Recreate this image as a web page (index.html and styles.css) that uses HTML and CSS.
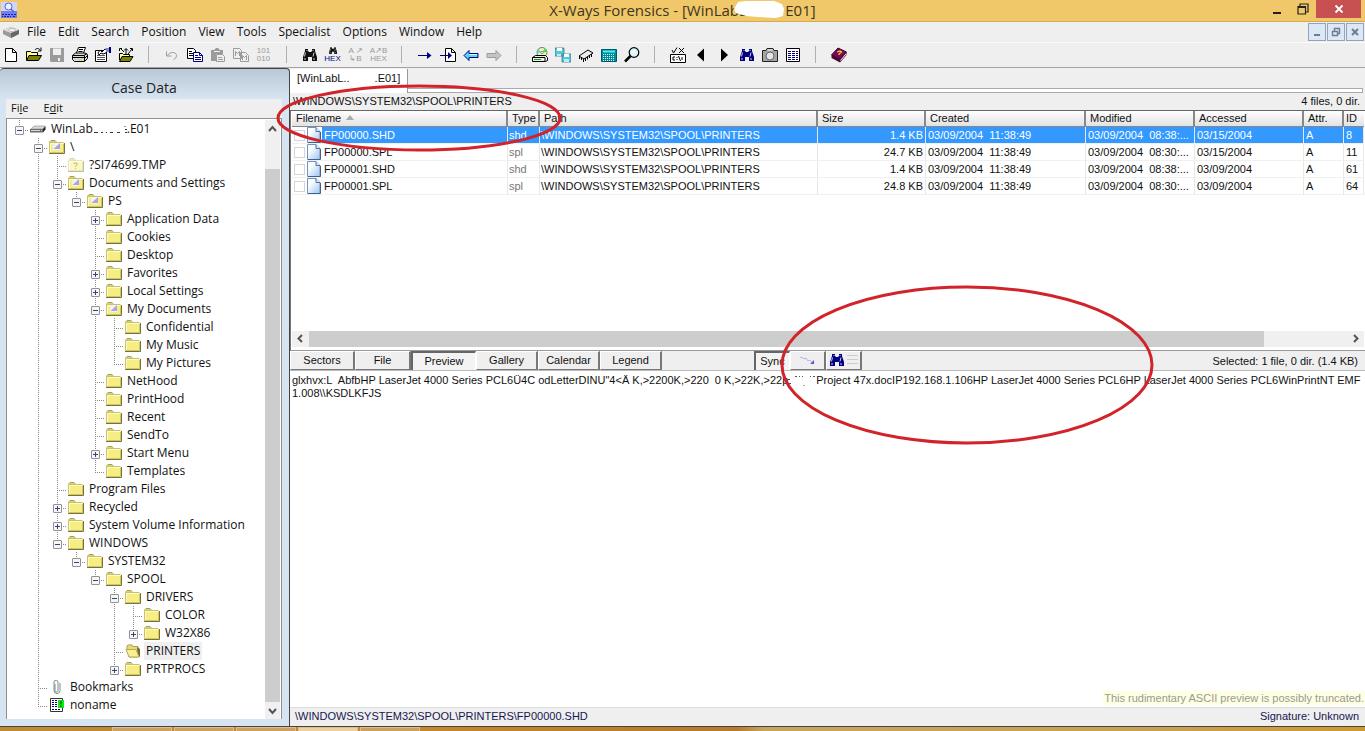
FILE: index.html
```html
<!DOCTYPE html>
<html lang="en">
<head>
    <meta charset="UTF-8">
    <meta name="viewport" content="width=device-width, initial-scale=1.0">
    <title>X-Ways Forensics</title>
    <link rel="stylesheet" href="styles.css">
</head>
<body>
    <!-- shared icons -->
    <svg class="defs" width="0" height="0">
        <linearGradient id="docFill" x1="0" y1="0" x2="1" y2="1"><stop offset="0.3" stop-color="#fafdff"/><stop offset="1" stop-color="#9fc4ee"/></linearGradient>
        <symbol id="folder" viewBox="0 0 16 14">
            <path d="M1 3V1.5L2 .5h4l1 1V3z" fill="#d8d27a" stroke="#a8a150"/>
            <path d="M0 2.5h15V13H0z" fill="#f6ee85"/>
            <path d="M.5 12.500V2.500h14" fill="none" stroke="#c9c26c"/>
            <path d="M1.500 12V3.500h13" fill="none" stroke="#fffbc8"/>
            <path d="M0 13.500h15.500V3" fill="none" stroke="#77713c"/>
            <path d="M1 12.500h13.500V4" fill="none" stroke="#cfc765"/>
        </symbol>
        <symbol id="folder-mark" viewBox="0 0 16 14">
            <use href="#folder"/>
            <path d="M4 3h7v7H4z" fill="#f4f2ec"/><path d="M11 3v6H4.500z" fill="#aaa6e6"/>
        </symbol>
        <symbol id="folder-lost" viewBox="0 0 16 14">
            <use href="#folder" opacity=".45"/>
            <path d="M6 6V5h3v2L7.500 8v1M7.500 10v1" fill="none" stroke="#c9bf58"/>
        </symbol>
        <symbol id="folder-open" viewBox="0 0 16 14">
            <path d="M2 5V2l1-1h4l1 1.500h5V13H4z" fill="#e4dc77" stroke="#a8a150"/>
            <path d="M12 3l3 2v8l-2-1z" fill="#6f6a38"/>
            <path d="M1 5.500h10L14 13H4z" fill="#f8f092" stroke="#b5ad58"/>
        </symbol>
        <symbol id="disk" viewBox="0 0 16 14">
            <path d="M1 7l3-3h11l-2 3z" fill="#d9d9d9" stroke="#9a9a9a" stroke-width=".7"/>
            <path d="M0 7h13v3.500H0z" fill="#6b6b6b"/><path d="M13 7l2.500-3v3.500L13 10.500z" fill="#222"/>
            <path d="M1 8.500h9" stroke="#ddd"/><path d="M11 8.500h1" stroke="#5f5"/>
        </symbol>
        <symbol id="doc" viewBox="0 0 14 16">
            <path d="M.5 .5h8.500l4 4v11H.5z" fill="url(#docFill)" stroke="#7093c4"/>
            <path d="M9 .5v4h4" fill="#dcebfb" stroke="#4e6fa3"/><path d="M1 15.500h12.500V5" fill="none" stroke="#40608f"/>
        </symbol>
        <symbol id="binoc" viewBox="0 0 16 16">
            <path d="M3 2h3v2l1 1h2l1-1V2h3v2l2 6v4h-5v-4H6v4H1v-4l2-6z" fill="currentColor"/>
            <path d="M3.500 5.500l-1 4M12 5.500l-1 4M5 3v1M11 3v1M3 11v2M12 11v2" stroke="#fff" stroke-width=".8"/>
        </symbol>
        <symbol id="copy" viewBox="0 0 16 16">
            <path d="M.5 1.500h6l2 2v8h-8z" fill="#fff" stroke="#000"/><path d="M2 4.500h3M2 6.500h4M2 8.500h4" stroke="#000"/>
            <path d="M6.500 5.500h6l3 3v6h-9z" fill="#fff" stroke="#000080"/><path d="M12.500 5.500v3h3M8 8.500h3M8 10.500h6M8 12.500h6" fill="none" stroke="#000080"/>
        </symbol>
    </svg>

    <header class="titlebar">
        <svg class="app-icon" width="16" height="16" viewBox="0 0 16 16">
            <rect width="16" height="16" fill="#cfd6fb"/><rect y="9" width="16" height="7" fill="#6f80ee"/>
            <circle cx="7.500" cy="4.500" r="3.500" fill="#eef2ff" stroke="#5560d8"/><path d="M10 7l3 3" stroke="#5560d8" stroke-width="1.500"/>
            <path d="M1 12.500h2M4 12.500h2M7 12.500h2M10 12.500h2M13 12.500h2M1 14.500h1M3 14.500h2M6 14.500h2M9 14.500h1M12 14.500h2" stroke="#1b22a8"/>
        </svg>
        <h1>X-Ways Forensics - [WinLabEm<svg class="blot" width="52" height="20" viewBox="0 0 52 20"><path d="M5 2l8-1h28l8 3 2 5-1 7-7 2-18-1-12-1-10-3-2-4z" fill="#fff"/></svg>E01]</h1>
        <div class="win-buttons">
            <button aria-label="Minimize"><svg width="12" height="12"><path d="M2 10h8" stroke="#222" stroke-width="2"/></svg></button>
            <button aria-label="Restore"><svg width="12" height="12"><path d="M1 3.500h7.500V11H1zM3 3.500V1h8v8H8.500" fill="none" stroke="#222" stroke-width="1.200"/><path d="M1 4h8" stroke="#222" stroke-width="2"/></svg></button>
            <button class="close" aria-label="Close"><svg width="10" height="10"><path d="M1.500 1.500l7 7M8.500 1.500l-7 7" stroke="#fff" stroke-width="1.800"/></svg></button>
        </div>
    </header>

    <nav class="menubar">
        <svg class="drive" width="17" height="12" viewBox="0 0 17 12"><path d="M0 4l8-3 8 3v4l-8 4-8-4z" fill="#999"/><path d="M0 4l8-3 8 3-8 3z" fill="#ddd"/><ellipse cx="9" cy="4" rx="3.500" ry="1.500" fill="#f8f8f8" stroke="#999" stroke-width=".6"/><path d="M8 7v5l8-4V4z" fill="#666"/></svg>
        <a href="#">File</a><a href="#">Edit</a><a href="#">Search</a><a href="#">Position</a><a href="#">View</a><a href="#">Tools</a><a href="#">Specialist</a><a href="#">Options</a><a href="#">Window</a><a href="#">Help</a>
        <div class="mdi-buttons">
            <button aria-label="Minimize document"><svg width="12" height="12"><path d="M3 9h6" stroke="#6d7c90" stroke-width="2"/></svg></button>
            <button aria-label="Restore document"><svg width="12" height="12"><path d="M2.500 5.500h5v4h-5zM4.500 5V2.500h5v5H8" fill="none" stroke="#6d7c90" stroke-width="1.400"/></svg></button>
            <button aria-label="Close document"><svg width="12" height="12"><path d="M3 3l6 6M9 3L3 9" stroke="#6d7c90" stroke-width="2"/></svg></button>
        </div>
    </nav>

    <div class="toolbar">
        <button aria-label="New"><svg viewBox="0 0 16 16"><path d="M2.500 1.500h7l4 4v9h-11zM9.500 1.500v4h4" fill="#fff" stroke="#000"/></svg></button>
        <button aria-label="Open"><svg viewBox="0 0 16 16"><path d="M.5 13V4.500h4l1 1h6V8" fill="#ffff9c" stroke="#000"/><path d="M.5 13.500L3 8.500h12.500l-3 5z" fill="#808000" stroke="#000"/><path d="M9 3c1-2 4-2 5 0M15 .5V4h-3" fill="none" stroke="#000"/></svg></button>
        <button aria-label="Save"><svg viewBox="0 0 16 16"><path d="M1 1h14v14H2l-1-1z" fill="#9b9b9b"/><path d="M4 1.500h8V8H4zM9 11h2v3H9z" fill="#efefef"/></svg></button>
        <button aria-label="Print"><svg viewBox="0 0 16 16"><path d="M4.500 6l2-5.500h7L11.500 6" fill="#fff" stroke="#000"/><path d="M7 2.500h4M6.500 4.500h4" stroke="#000"/><path d="M.5 8.500l3-2.500h9.500l2.500 1.500v4l-3 3H2.500l-2-2z" fill="#d8d8d8" stroke="#000"/><path d="M.5 8.500h11.500l3-2M.5 10.500H12M12.500 8.500v6M13 11l2-2" fill="none" stroke="#000"/><path d="M7 12.500h3" stroke="#e8e000"/></svg></button>
        <button aria-label="Properties"><svg viewBox="0 0 16 16"><path d="M.5 3.500h11v11H.5z" fill="#fff" stroke="#000"/><path d="M2 8.500h8M2 10.500h8M2 12.500h8" stroke="#555"/><path d="M3 6l2-3 2 2 3-3 2 1-1 3-3 1-2-1-2 2z" fill="#fff" stroke="#000"/><path d="M11 1h3v4h-3z" fill="#8888c8"/><path d="M14 0h2v6h-2z" fill="#000080"/></svg></button>
        <button aria-label="Open folder"><svg viewBox="0 0 16 16"><path d="M1.500 13V6.500h3l1 1h6V9" fill="#ffff9c" stroke="#000"/><path d="M1.500 14.500L4 9.500h11l-3 5z" fill="#808000" stroke="#000"/><path d="M2 1l4 4M1.500 4V1.500H4M8 8V2M6 3.500l2-2 2 2M10 7l4-5M12 1.500h2.500V4" fill="none" stroke="#000"/></svg></button>
        <span class="sep"></span>
        <button aria-label="Undo"><svg viewBox="0 0 16 16"><path d="M3.500 8.500c2-4 9-4 9 0 0 2-1 3-3 4M2.500 4.500v4.500h5" fill="none" stroke="#9b9b9b"/></svg></button>
        <button aria-label="Copy"><svg viewBox="0 0 16 16"><use href="#copy"/></svg></button>
        <button aria-label="Paste"><svg viewBox="0 0 16 16"><path d="M1 3h3l2-2h2l2 2h3v4H6v7H1z" fill="#9b9b9b"/><path d="M4 4.500h6" stroke="#efefef"/><path d="M6.500 7.500h6l2 2v5h-8zM8 10.500h4M8 12.500h5" fill="#efefef" stroke="#9b9b9b"/></svg></button>
        <button aria-label="Write clipboard"><svg viewBox="0 0 16 16"><path d="M.5 1.500h6l2 2v8h-8zM7.500 5.500h5l3 3v6h-8z" fill="#efefef" stroke="#9b9b9b"/><path d="M2.500 9V4.500l2 2 2-2V9M9.500 13V8.500l2 2 2-2V13" fill="none" stroke="#9b9b9b"/></svg></button>
        <button class="bits off" aria-label="Convert"><span>101</span><span>010</span></button>
        <span class="sep"></span>
        <button aria-label="Find text"><svg viewBox="0 0 16 16"><use href="#binoc"/></svg></button>
        <button class="bits hex" aria-label="Find hex"><svg viewBox="0 0 16 16"><use href="#binoc"/></svg><span>HEX</span></button>
        <button class="bits off" aria-label="Replace text"><span>A ↗</span><span>↳B</span></button>
        <button class="bits off" aria-label="Replace hex"><span>A↗B</span><span>HEX</span></button>
        <span class="sep"></span>
        <button aria-label="Go to offset"><svg viewBox="0 0 16 16"><path d="M1 8.500h10" stroke="#000080"/><path d="M10 5v7l4.500-3.500z" fill="#000080"/></svg></button>
        <button aria-label="Go to page"><svg viewBox="0 0 16 16"><path d="M5.500 1.500h6l4 4v9h-10zM11.500 1.500v4h4" fill="#fff" stroke="#000"/><path d="M0 8.500h9" stroke="#000080"/><path d="M8 5v7l4-3.500z" fill="#000080"/></svg></button>
        <button aria-label="Back"><svg viewBox="0 0 16 16"><path d="M1 8.500l5-5v3h9v4H6v3z" fill="#4fd8f5" stroke="#000080"/><path d="M6 7.500h8" stroke="#dffaff"/></svg></button>
        <button aria-label="Forward"><svg viewBox="0 0 16 16"><path d="M15 8.500l-5-5v3H1v4h9v3z" fill="#c4c4c4" stroke="#9b9b9b"/></svg></button>
        <span class="sep"></span>
        <button aria-label="Open disk"><svg viewBox="0 0 16 16"><circle cx="10" cy="5.500" r="5" fill="#f2f2b0" stroke="#777"/><path d="M10 5.500L13 1.500A5 5 0 0 1 15 5z" fill="#3fe04f"/><path d="M10 5.500L6 2.500 5 6z" fill="#40d8e8"/><circle cx="10" cy="5.500" r="1.200" fill="#fff" stroke="#555" stroke-width=".6"/><path d="M.5 10.500l3-2h10l2 2v3l-2 1H.5z" fill="#eee" stroke="#000"/><path d="M.5 10.500h12.500v4" fill="none" stroke="#000"/><path d="M2 12.500h7" stroke="#0a0"/></svg></button>
        <button aria-label="Clone disk"><svg viewBox="0 0 16 16"><path d="M0 1h9v8H0zM7 7h9v8H7z" fill="#4ccbd8" stroke="#4c7288" stroke-width=".8"/><path d="M2 1h5v3H2zM9 7h5v3H9z" fill="#fff"/><path d="M2 7h4v2H2zM9 12h5v3H9z" fill="#b5f0f5"/></svg></button>
        <button aria-label="Open RAM"><svg viewBox="0 0 16 16"><path d="M1 9l9-6 5 3-9 6z" fill="#ececec" stroke="#000"/><path d="M1.500 9v3M3.500 10v3M5.500 12v3M7.500 11v3M9.500 9.500v3M11.500 8v3M13.500 7v3" stroke="#000"/></svg></button>
        <button aria-label="Calculator"><svg viewBox="0 0 16 16"><path d="M.5 2.500h15v12H.5z" fill="#008b96" stroke="#005868"/><path d="M2 4.500h12" stroke="#45f1ff" stroke-width="2"/><path d="M2 7.500h12M2 9.500h12M2 11.500h12M2 13.500h12" stroke="#d8fcff" stroke-dasharray="1 1"/></svg></button>
        <button aria-label="Analyze"><svg viewBox="0 0 16 16"><circle cx="10" cy="5.500" r="4.800" fill="#d8f7fa" stroke="#000" stroke-width="1.200"/><path d="M8 6l3-3" stroke="#fff" stroke-width="2"/><path d="M6.500 9L1 14.500" stroke="#000" stroke-width="2.500"/></svg></button>
        <span class="sep"></span>
        <button aria-label="Options"><svg viewBox="0 0 16 16"><path d="M.5 7.500h15v8H.5z" fill="#fff" stroke="#000"/><path d="M2 3l1.500 3L7 .5M9 1l5 5M14 1L9 6M5 10H3v3h2M7 10v1M7 12v1M8.500 9l2 5M12 10v3" fill="none" stroke="#000"/></svg></button>
        <button aria-label="Previous"><svg viewBox="0 0 16 16"><path d="M11 1.500v13L4 8z" fill="#000"/></svg></button>
        <button aria-label="Next"><svg viewBox="0 0 16 16"><path d="M5 1.500v13L12 8z" fill="#000"/></svg></button>
        <button class="navy" aria-label="Search list"><svg viewBox="0 0 16 16"><use href="#binoc"/></svg></button>
        <button aria-label="Snapshot"><svg viewBox="0 0 16 16"><path d="M.5 3.500H4l1-2h6l1 2h3.500v11H.5z" fill="#a5a5a5" stroke="#222"/><circle cx="8" cy="9" r="4" fill="#e5e5e5" stroke="#666"/><path d="M5.500 3h5" stroke="#fff"/></svg></button>
        <button aria-label="Report"><svg viewBox="0 0 16 16"><path d="M1.500 1.500h13v13h-13z" fill="#fff" stroke="#000"/><path d="M3 4.500h3M7 4.500h3M11 4.500h2M3 6.500h3M7 6.500h3M11 6.500h2M3 8.500h3M7 8.500h3M11 8.500h2M3 10.500h3M7 10.500h3M11 10.500h2M3 12.500h3M7 12.500h3M11 12.500h2" stroke="#000080"/></svg></button>
        <span class="sep"></span>
        <button aria-label="Help"><svg viewBox="0 0 16 16"><path d="M.5 8L7 1l8.500 4L9 12z" fill="#7a0a50" stroke="#3b0028"/><path d="M.5 8v3L9 15.500V12zM9 12v3.500L15.500 8V5z" fill="#4d0635"/><path d="M9.500 13.500l5.500-6.500" stroke="#fff"/><path d="M6 5l3-1 1.500 1L8 7v1" fill="none" stroke="#ffd83a" stroke-width="1.200"/></svg></button>
    </div>

    <main class="workspace">
        <aside class="case-panel">
            <h2>Case Data</h2>
            <nav class="case-menu"><a href="#">Fi<u>l</u>e</a><a href="#">E<u>d</u>it</a></nav>
            <div class="tree-box">
                <ul class="tree">
                    <li>
                        <div class="row"><span class="cell"><button class="tg minus" aria-label="Collapse"></button></span><svg class="ico"><use href="#disk"/></svg><span class="label">WinLab<svg class="smudge" width="34" height="12"><path d="M1 9.500h4M8 9.500h2M13 9.500h1M17 9.500h3M24 9.500h3M32 3v1M32 6.500h2M32 9.500h2" stroke="#333" fill="none"/></svg>.E01</span></div>
                        <ul>
                            <li>
                                <div class="row"><span class="cell"><button class="tg minus" aria-label="Collapse"></button></span><svg class="ico"><use href="#folder-mark"/></svg><span class="label">\</span></div>
                                <ul>
                                    <li><div class="row"><span class="cell"></span><svg class="ico"><use href="#folder-lost"/></svg><span class="label">?SI74699.TMP</span></div></li>
                                    <li>
                                        <div class="row"><span class="cell"><button class="tg minus" aria-label="Collapse"></button></span><svg class="ico"><use href="#folder-mark"/></svg><span class="label">Documents and Settings</span></div>
                                        <ul>
                                            <li>
                                                <div class="row"><span class="cell"><button class="tg minus" aria-label="Collapse"></button></span><svg class="ico"><use href="#folder-mark"/></svg><span class="label">PS</span></div>
                                                <ul>
                                                    <li><div class="row"><span class="cell"><button class="tg" aria-label="Expand"></button></span><svg class="ico"><use href="#folder"/></svg><span class="label">Application Data</span></div></li>
                                                    <li><div class="row"><span class="cell"></span><svg class="ico"><use href="#folder"/></svg><span class="label">Cookies</span></div></li>
                                                    <li><div class="row"><span class="cell"></span><svg class="ico"><use href="#folder"/></svg><span class="label">Desktop</span></div></li>
                                                    <li><div class="row"><span class="cell"><button class="tg" aria-label="Expand"></button></span><svg class="ico"><use href="#folder"/></svg><span class="label">Favorites</span></div></li>
                                                    <li><div class="row"><span class="cell"><button class="tg" aria-label="Expand"></button></span><svg class="ico"><use href="#folder"/></svg><span class="label">Local Settings</span></div></li>
                                                    <li>
                                                        <div class="row"><span class="cell"><button class="tg minus" aria-label="Collapse"></button></span><svg class="ico"><use href="#folder-mark"/></svg><span class="label">My Documents</span></div>
                                                        <ul>
                                                            <li><div class="row"><span class="cell"></span><svg class="ico"><use href="#folder"/></svg><span class="label">Confidential</span></div></li>
                                                            <li><div class="row"><span class="cell"></span><svg class="ico"><use href="#folder"/></svg><span class="label">My Music</span></div></li>
                                                            <li><div class="row"><span class="cell"></span><svg class="ico"><use href="#folder"/></svg><span class="label">My Pictures</span></div></li>
                                                        </ul>
                                                    </li>
                                                    <li><div class="row"><span class="cell"></span><svg class="ico"><use href="#folder"/></svg><span class="label">NetHood</span></div></li>
                                                    <li><div class="row"><span class="cell"></span><svg class="ico"><use href="#folder"/></svg><span class="label">PrintHood</span></div></li>
                                                    <li><div class="row"><span class="cell"></span><svg class="ico"><use href="#folder"/></svg><span class="label">Recent</span></div></li>
                                                    <li><div class="row"><span class="cell"></span><svg class="ico"><use href="#folder"/></svg><span class="label">SendTo</span></div></li>
                                                    <li><div class="row"><span class="cell"><button class="tg" aria-label="Expand"></button></span><svg class="ico"><use href="#folder"/></svg><span class="label">Start Menu</span></div></li>
                                                    <li><div class="row"><span class="cell"></span><svg class="ico"><use href="#folder"/></svg><span class="label">Templates</span></div></li>
                                                </ul>
                                            </li>
                                        </ul>
                                    </li>
                                    <li><div class="row"><span class="cell"></span><svg class="ico"><use href="#folder"/></svg><span class="label">Program Files</span></div></li>
                                    <li><div class="row"><span class="cell"><button class="tg" aria-label="Expand"></button></span><svg class="ico"><use href="#folder"/></svg><span class="label">Recycled</span></div></li>
                                    <li><div class="row"><span class="cell"><button class="tg" aria-label="Expand"></button></span><svg class="ico"><use href="#folder"/></svg><span class="label">System Volume Information</span></div></li>
                                    <li>
                                        <div class="row"><span class="cell"><button class="tg minus" aria-label="Collapse"></button></span><svg class="ico"><use href="#folder"/></svg><span class="label">WINDOWS</span></div>
                                        <ul>
                                            <li>
                                                <div class="row"><span class="cell"><button class="tg minus" aria-label="Collapse"></button></span><svg class="ico"><use href="#folder"/></svg><span class="label">SYSTEM32</span></div>
                                                <ul>
                                                    <li>
                                                        <div class="row"><span class="cell"><button class="tg minus" aria-label="Collapse"></button></span><svg class="ico"><use href="#folder"/></svg><span class="label">SPOOL</span></div>
                                                        <ul>
                                                            <li>
                                                                <div class="row"><span class="cell"><button class="tg minus" aria-label="Collapse"></button></span><svg class="ico"><use href="#folder"/></svg><span class="label">DRIVERS</span></div>
                                                                <ul>
                                                                    <li><div class="row"><span class="cell"></span><svg class="ico"><use href="#folder"/></svg><span class="label">COLOR</span></div></li>
                                                                    <li><div class="row"><span class="cell"><button class="tg" aria-label="Expand"></button></span><svg class="ico"><use href="#folder"/></svg><span class="label">W32X86</span></div></li>
                                                                </ul>
                                                            </li>
                                                            <li><div class="row"><span class="cell"></span><svg class="ico"><use href="#folder-open"/></svg><span class="label current">PRINTERS</span></div></li>
                                                            <li><div class="row"><span class="cell"><button class="tg" aria-label="Expand"></button></span><svg class="ico"><use href="#folder"/></svg><span class="label">PRTPROCS</span></div></li>
                                                        </ul>
                                                    </li>
                                                </ul>
                                            </li>
                                        </ul>
                                    </li>
                                </ul>
                            </li>
                            <li><div class="row"><span class="cell"></span><svg class="ico" viewBox="0 0 16 14"><path d="M6 4v6.500a1.500 1.500 0 0 0 3 0V2.500a2 2 0 0 0-4-.5v8.500a3 3 0 0 0 6 0V3" fill="none" stroke="#7d8a8a"/></svg><span class="label">Bookmarks</span></div></li>
                            <li><div class="row"><span class="cell"></span><svg class="ico" viewBox="0 0 16 14"><path d="M1.500 .5h12v13h-12z" fill="#fff" stroke="#333"/><path d="M3 2.500h6M3 4.500h6M3 6.500h6M3 8.500h6M3 11.500h9" stroke="#000060" stroke-dasharray="2 1"/><path d="M9 2h6v8H9z" fill="#12e812"/><path d="M12 3v3.500M12 7.500v1.500" stroke="#033"/></svg><span class="label">noname</span></div></li>
                        </ul>
                    </li>
                </ul>
                <div class="vscroll">
                    <svg width="15" height="17"><path d="M4 11l3.500-4L11 11" fill="none" stroke="#555" stroke-width="2"/></svg>
                    <div class="thumb"></div>
                    <svg width="15" height="17"><path d="M4 7l3.500 4L11 7" fill="none" stroke="#555" stroke-width="2"/></svg>
                </div>
            </div>
        </aside>

        <section class="browser">
            <div class="tabs">
                <a href="#" class="tab">[WinLabL..<span class="gap"></span>.E01]</a>
                <span class="strip"></span>
            </div>
            <div class="pathbar"><span>\WINDOWS\SYSTEM32\SPOOL\PRINTERS</span><span>4 files, 0 dir.</span></div>

            <div class="list">
                <table>
                    <colgroup><col class="c-name"><col class="c-type"><col><col class="c-size"><col class="c-created"><col class="c-date"><col class="c-date"><col class="c-attr"><col class="c-id"></colgroup>
                    <thead>
                        <tr><th>Filename <svg width="8" height="5"><path d="M0 5l4-5 4 5z" fill="#aaa"/></svg></th><th>Type</th><th>Path</th><th>Size</th><th>Created</th><th>Modified</th><th>Accessed</th><th>Attr.</th><th>ID</th></tr>
                    </thead>
                    <tbody>
                        <tr class="selected"><td><div class="file"><input type="checkbox" aria-label="FP00000.SHD"><svg width="14" height="16"><use href="#doc"/></svg><span>FP00000.SHD</span></div></td><td>shd</td><td>\WINDOWS\SYSTEM32\SPOOL\PRINTERS</td><td>1.4 KB</td><td>03/09/2004&nbsp; 11:38:49</td><td>03/09/2004&nbsp; 08:38:...</td><td>03/15/2004</td><td>A</td><td>8</td></tr>
                        <tr><td><div class="file"><input type="checkbox" aria-label="FP00000.SPL"><svg width="14" height="16"><use href="#doc"/></svg><span>FP00000.SPL</span></div></td><td>spl</td><td>\WINDOWS\SYSTEM32\SPOOL\PRINTERS</td><td>24.7 KB</td><td>03/09/2004&nbsp; 11:38:49</td><td>03/09/2004&nbsp; 08:30:...</td><td>03/15/2004</td><td>A</td><td>11</td></tr>
                        <tr><td><div class="file"><input type="checkbox" aria-label="FP00001.SHD"><svg width="14" height="16"><use href="#doc"/></svg><span>FP00001.SHD</span></div></td><td>shd</td><td>\WINDOWS\SYSTEM32\SPOOL\PRINTERS</td><td>1.4 KB</td><td>03/09/2004&nbsp; 11:38:49</td><td>03/09/2004&nbsp; 08:38:...</td><td>03/09/2004</td><td>A</td><td>61</td></tr>
                        <tr><td><div class="file"><input type="checkbox" aria-label="FP00001.SPL"><svg width="14" height="16"><use href="#doc"/></svg><span>FP00001.SPL</span></div></td><td>spl</td><td>\WINDOWS\SYSTEM32\SPOOL\PRINTERS</td><td>24.8 KB</td><td>03/09/2004&nbsp; 11:38:49</td><td>03/09/2004&nbsp; 08:30:...</td><td>03/09/2004</td><td>A</td><td>64</td></tr>
                    </tbody>
                </table>
                <div class="hscroll">
                    <svg width="17" height="15"><path d="M10 4L6.500 7.500 10 11" fill="none" stroke="#555" stroke-width="2"/></svg>
                    <div class="track"><div class="thumb"></div></div>
                    <svg width="17" height="15"><path d="M7 4l3.500 3.500L7 11" fill="none" stroke="#555" stroke-width="2"/></svg>
                </div>
            </div>

            <div class="modes">
                <button>Sectors</button>
                <button>File</button>
                <button class="pressed">Preview</button>
                <button>Gallery</button>
                <button>Calendar</button>
                <button>Legend</button>
                <span class="spacer"></span>
                <button class="pressed small">Sync</button>
                <button class="small" aria-label="Explore"><svg width="18" height="10"><path d="M1 3l2-1 2 2 2-1 2 3 2-1 2 2" fill="none" stroke="#b5b3e6"/><path d="M15 5v4h-4z" fill="#5f58c8"/></svg></button>
                <button class="small navy" aria-label="Search hits"><svg width="30" height="16"><use href="#binoc" width="16" height="16"/><path d="M18 3.500h11M18 7.500h11M18 11.500h11" stroke="#ccc"/></svg></button>
                <span class="selection">Selected: 1 file, 0 dir. (1.4 KB)</span>
            </div>

            <div class="preview">
                <p>glxhvx:L&nbsp; AbfbHP LaserJet 4000 Series PCL6Ü4C odLetterDINU"4&lt;Ä K,&gt;2200K,&gt;220&nbsp; 0 K,&gt;22K,&gt;22p<svg class="smudge" width="28" height="12"><path d="M0 5.500h2M1 9.500h2M7 2.500h2M11 2.500h1M14 2.500h1M16 11v1M22 2.500h1M25 2.500h2" stroke="#555"/></svg>Project 47x.docIP192.168.1.106HP LaserJet 4000 Series PCL6HP LaserJet 4000 Series PCL6WinPrintNT EMF<br>1.008\\KSDLKFJS</p>
                <span class="notice">This rudimentary ASCII preview is possibly truncated.</span>
            </div>
            <footer class="status"><span>\WINDOWS\SYSTEM32\SPOOL\PRINTERS\FP00000.SHD</span><span>Signature: Unknown</span></footer>
        </section>
    </main>

    <div class="taskbar"><span></span><span></span><span></span><span class="active"></span><span></span></div>

    <!-- red pen marks on top of the window -->
    <svg class="marks" aria-hidden="true">
        <ellipse cx="419" cy="118" rx="141" ry="32"/>
        <ellipse cx="967" cy="365" rx="185" ry="78"/>
    </svg>
</body>
</html>
```

FILE: styles.css
```css
* {
    box-sizing: border-box;
}
body {
    margin: 0;
    height: 100vh;
    display: flex;
    flex-direction: column;
    overflow: hidden;
    background: #efefef;
    color: #111;
    font: 11px/13px "Liberation Sans", Arial, sans-serif;
}
a {
    color: inherit;
    text-decoration: none;
}
button {
    font: inherit;
    color: inherit;
    padding: 0;
    border: 0;
    background: none;
    display: flex;
    align-items: center;
    justify-content: center;
}
svg {
    flex: none;
}
.defs {
    position: absolute;
}

/* title bar */
.titlebar {
    flex: none;
    display: flex;
    align-items: flex-start;
    height: 22px;
    background: #f0c869;
    border-bottom: 1px solid #d5aa52;
}
.app-icon {
    margin: 2px 0 0 1px;
}
.titlebar h1 {
    flex: 1;
    margin: 0;
    padding-left: 84px;
    text-align: center;
    font: 15px/21px "Open Sans", sans-serif;
    color: #40351c;
    white-space: nowrap;
}
.blot {
    margin: 0 0 0 -28px;
    vertical-align: top;
}
.win-buttons {
    display: flex;
    padding-right: 4px;
}
.win-buttons button {
    width: 26px;
    height: 18px;
}
.win-buttons .close {
    width: 45px;
    background: #c75050;
}

/* menu */
.menubar {
    flex: none;
    display: flex;
    align-items: center;
    height: 20px;
    padding-left: 3px;
    font: 12px/18px "Open Sans", sans-serif;
}
.drive {
    margin-right: 7px;
}
.menubar a {
    margin-right: 12px;
}
.mdi-buttons {
    margin-left: auto;
    display: flex;
    gap: 1px;
    padding-right: 1px;
}
.mdi-buttons button {
    width: 18px;
    height: 18px;
    background: #dbe9f7;
    border: 1px solid #94a3b6;
}

/* toolbar */
.toolbar {
    flex: none;
    display: flex;
    align-items: center;
    height: 26px;
    margin-left: -1px;
    padding-bottom: 1px;
    border-top: 1px solid #fafafa;
    border-bottom: 1px solid #a3a3a3;
}
.toolbar button {
    width: 23px;
    height: 20px;
}
.toolbar svg {
    width: 16px;
    height: 16px;
}
.toolbar .sep {
    width: 1px;
    height: 17px;
    margin: 0 11px;
    background: #b0b0b0;
}
.toolbar .bits {
    flex-direction: column;
    font: 8px/8px "Liberation Sans", sans-serif;
}
.toolbar .off {
    color: #999;
}
.toolbar .hex svg {
    width: 10px;
    height: 9px;
}
.toolbar .hex span {
    color: #000080;
}
.navy {
    color: #000080;
}

.workspace {
    flex: 1;
    min-height: 0;
    display: grid;
    grid-template-columns: 290px 1fr;
    border-bottom: 1px solid #444;
}

/* case data */
.case-panel {
    display: flex;
    flex-direction: column;
    min-height: 0;
    padding: 0 7px 7px 6px;
    background: linear-gradient(#b9c7d6, #d7e4f2 30px);
    border-top: 1px solid #444;
    border-right: 1px solid #444;
    border-radius: 4px 4px 0 0;
}
.case-panel h2 {
    margin: 0;
    height: 30px;
    text-align: center;
    font: 14px/38px "Open Sans", sans-serif;
    color: #222;
}
.case-menu {
    display: flex;
    gap: 15px;
    height: 19px;
    padding-left: 5px;
    background: #efefef;
    font: 11px/18px "Open Sans", sans-serif;
}
.tree-box {
    flex: 1;
    min-height: 0;
    display: flex;
    padding: 1px 1px 0 3px;
    background: #fff;
    border: 1px solid #8a9199;
    border-bottom: 0;
    font: 12px/18px "Open Sans", sans-serif;
}
.tree {
    flex: 1;
    overflow: hidden;
}
.tree, .tree ul {
    margin: 0;
    padding: 0;
    list-style: none;
}
.tree ul {
    margin-left: 19px;
}
.tree li {
    background: repeating-linear-gradient(#888 0 1px, transparent 1px 2px) 9px 0 / 1px 100% no-repeat;
}
.tree li:last-child {
    background-size: 1px 10px;
}
.row {
    display: flex;
    height: 18px;
}
.cell {
    width: 19px;
    display: flex;
    padding: 6px 0 0 5px;
    background: repeating-linear-gradient(90deg, #888 0 1px, transparent 1px 2px) 9px 10px / 10px 1px no-repeat;
}
.tg {
    width: 9px;
    height: 9px;
    border: 1px solid #919191;
    border-radius: 1px;
    background: linear-gradient(#34457d, #34457d) 1px 3px / 5px 1px no-repeat, linear-gradient(#34457d, #34457d) 3px 1px / 1px 5px no-repeat, #f6f6f6;
}
.tg.minus {
    background: linear-gradient(#34457d, #34457d) 1px 3px / 5px 1px no-repeat, #f6f6f6;
}
.ico {
    width: 16px;
    height: 14px;
    margin: 2px 3px 0 1px;
}
.label {
    padding: 0 2px;
    white-space: nowrap;
}
.label.current {
    background: #efefef;
}
.smudge {
    vertical-align: -2px;
}
.vscroll {
    width: 15px;
    display: flex;
    flex-direction: column;
    background: #f0f0f0;
}
.vscroll .thumb {
    flex: 1;
    margin-top: 32px;
    background: #cdcdcd;
}

/* directory browser */
.browser {
    display: flex;
    flex-direction: column;
    min-width: 0;
    min-height: 0;
}
.tabs {
    display: flex;
    align-items: flex-end;
    height: 25px;
    padding-right: 2px;
}
.tab {
    height: 24px;
    padding: 0 7px;
    line-height: 18px;
    background: #fff;
    border-right: 1px solid #999;
}
.gap {
    display: inline-block;
    width: 25px;
}
.strip {
    flex: 1;
    height: 5px;
    background: #fff;
    border: 1px solid #aaa;
    border-left: 0;
}
.pathbar {
    display: flex;
    justify-content: space-between;
    padding: 2px 5px 2px 3px;
}
.list {
    flex: 7;
    display: flex;
    flex-direction: column;
    justify-content: space-between;
    padding: 0 1px 3px 1px;
    background: #fff;
    border-top: 1px solid #666;
    border-left: 1px solid #777;
    border-bottom: 1px solid #999;
}
table {
    width: 100%;
    table-layout: fixed;
    border-collapse: separate;
    border-spacing: 0;
}
.c-name { width: 216px; }
.c-type { width: 32px; }
.c-size { width: 108px; }
.c-created { width: 160px; }
.c-date { width: 109px; }
.c-attr { width: 40px; }
.c-id { width: 20px; }
th {
    height: 16px;
    padding: 0 4px;
    text-align: left;
    font-weight: normal;
    white-space: nowrap;
    background: linear-gradient(#fff, #e2e2e2);
    border-right: 2px solid #888;
    border-bottom: 1px solid #888;
}
th svg {
    margin-left: 2px;
    vertical-align: 2px;
}
th:last-child {
    border-right: 0;
    padding: 0 2px;
}
td {
    height: 17px;
    padding: 0 1px;
    white-space: nowrap;
    overflow: hidden;
    border-right: 1px solid #e8e8e8;
    border-bottom: 1px solid #f0f0f0;
}
td:nth-child(1) {
    padding: 0;
}
td:nth-child(2) {
    color: #777;
}
td:nth-child(4) {
    padding-right: 2px;
    text-align: right;
}
td:nth-child(n+5) {
    padding-left: 2px;
}
.selected td, .selected td:nth-child(2) {
    color: #fff;
    background: #3399ff;
}
.file {
    display: flex;
    align-items: center;
    height: 16px;
    padding-left: 2px;
}
.file input {
    appearance: none;
    flex: none;
    width: 11px;
    height: 11px;
    margin: 0 2px 0 0;
    border: 1px solid #d4d4d4;
    background: #fff;
}
.file span {
    flex: 1;
    margin-left: 1px;
    padding-left: 2px;
    line-height: 16px;
}
.selected td:first-child {
    background: #fff;
}
.selected .file span {
    background: #3399ff;
}
.hscroll {
    display: flex;
    height: 16px;
    background: #f0f0f0;
}
.hscroll .track {
    flex: 1;
}
.hscroll .thumb {
    width: 92%;
    height: 100%;
    background: #cdcdcd;
}

/* view mode buttons */
.modes {
    display: flex;
    height: 20px;
    border-bottom: 1px solid #bbb;
}
.modes button {
    width: 62px;
    background: #efefef;
    border: 1px solid;
    border-color: #fff #777 #777 #fff;
    border-right-width: 2px;
}
.modes button:first-child {
    width: 65px;
}
.modes button:nth-child(2) {
    width: 56px;
}
.modes .pressed {
    width: 65px;
    background: #f3f3f3;
    border-color: #666 #fff #fff #666;
    border-width: 2px 1px 0 2px;
}
.modes .small {
    width: 36px;
}
.spacer {
    width: 92px;
}
.selection {
    margin-left: auto;
    padding: 4px 7px 0 0;
}

.preview {
    flex: 10;
    display: flex;
    flex-direction: column;
    justify-content: space-between;
    background: #fff;
}
.preview p {
    margin: 0;
    padding: 3px 0 0 2px;
    white-space: nowrap;
}
.notice {
    align-self: flex-end;
    padding: 1px 1px 0;
    margin-bottom: 2px;
    color: #999;
    background: #ffffe1;
}
.status {
    display: flex;
    justify-content: space-between;
    padding: 2px 6px 3px 5px;
    color: #16164f;
    border-top: 1px solid #ddd;
}

.taskbar {
    flex: none;
    display: flex;
    gap: 2px;
    height: 4px;
    padding-left: 112px;
    background: linear-gradient(90deg, #c08a35, #c8872c 30%, #b87a2c 54%, #c9a55c 56%, #c9a050 86%, #cf9a2d);
}
.taskbar span {
    width: 60px;
    background: #cf9f5f;
    border: 1px solid #e0bd8a;
    border-bottom: 0;
}
.taskbar .active {
    background: #ecd0a0;
}

.marks {
    position: absolute;
    inset: 0;
    width: 100%;
    height: 100%;
    pointer-events: none;
    fill: none;
    stroke: #d2232a;
    stroke-width: 3;
}
```
